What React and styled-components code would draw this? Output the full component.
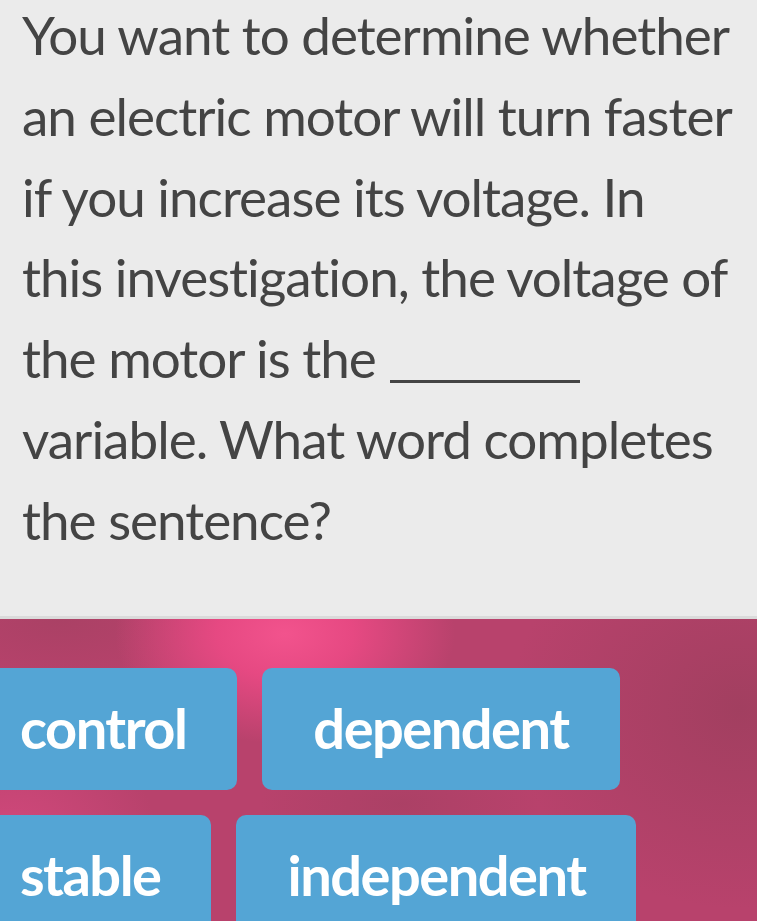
import React from "react";
import styled, { createGlobalStyle } from "styled-components";

const GlobalStyle = createGlobalStyle`
  html, body {
    margin: 0;
    padding: 0;
    background: #ebebeb;
    overflow: hidden;
  }
`;

const lines = [
  "You want to determine whether",
  "an electric motor will turn faster",
  "if you increase its voltage. In",
  "this investigation, the voltage of",
];

const answerRows = [
  ["control", "dependent"],
  ["stable", "independent"],
];

function App() {
  return (
    <Page>
      <GlobalStyle />
      <QuestionPanel>
        <Question>
          {lines.map((l) => (
            <Line key={l}>{l}</Line>
          ))}
          <Line>
            the motor is the <Blank />
          </Line>
          <Line>variable. What word completes</Line>
          <Line>the sentence?</Line>
        </Question>
      </QuestionPanel>
      <AnswerPanel>
        <Answers>
          {answerRows.map((row, i) => (
            <Row key={i}>
              {row.map((a) => (
                <Answer key={a}>{a}</Answer>
              ))}
            </Row>
          ))}
        </Answers>
      </AnswerPanel>
    </Page>
  );
}

const Page = styled.div`
  width: 757px;
  height: 921px;
  display: flex;
  flex-direction: column;
  overflow: hidden;
`;

const QuestionPanel = styled.div`
  height: 616px;
  flex-shrink: 0;
  background: #ebebeb;
  border-bottom: 3px solid #dadada;
  overflow: hidden;
`;

const Question = styled.div`
  margin-top: -5px;
  padding: 0 22px;
  font-family: "Lato", "Open Sans", sans-serif;
  font-size: 53px;
  line-height: 80.8px;
  color: #444444;
  letter-spacing: -1px;
`;

const Line = styled.div`
  white-space: nowrap;
`;

const Blank = styled.span`
  display: inline-block;
  width: 190px;
  height: 0;
  margin-left: 2px;
  margin-bottom: -5px;
  border-bottom: 3px solid #444444;
`;

const AnswerPanel = styled.div`
  flex: 1;
  padding-top: 49px;
  background:
    radial-gradient(ellipse 170px 110px at 285px 15px, #f2538d 0%, rgba(238, 74, 134, 0.85) 40%, rgba(236, 72, 132, 0) 100%),
    radial-gradient(ellipse 150px 130px at 10px 230px, rgba(216, 74, 128, 0.85), rgba(216, 74, 128, 0) 100%),
    radial-gradient(ellipse 230px 200px at 740px 90px, #a23f60 0%, rgba(162, 63, 96, 0) 100%),
    radial-gradient(ellipse 150px 70px at 60px 0px, #aa4165 0%, rgba(170, 65, 101, 0) 100%),
    radial-gradient(ellipse 140px 60px at 400px 185px, rgba(168, 64, 100, 0.8) 0%, rgba(168, 64, 100, 0) 100%),
    #b8426c;
`;

const Answers = styled.div`
  margin-left: -31px;
  display: flex;
  flex-direction: column;
  gap: 25px;
`;

const Row = styled.div`
  display: flex;
  gap: 25px;
`;

const Answer = styled.div`
  height: 122px;
  padding: 0 51px 4px;
  box-sizing: border-box;
  display: flex;
  align-items: center;
  justify-content: center;
  background: #54a5d5;
  border-radius: 10px;
  color: #ffffff;
  font-family: "Lato", "Open Sans", sans-serif;
  font-weight: 700;
  font-size: 56px;
  letter-spacing: -1.5px;
  white-space: nowrap;
`;

export default App;
